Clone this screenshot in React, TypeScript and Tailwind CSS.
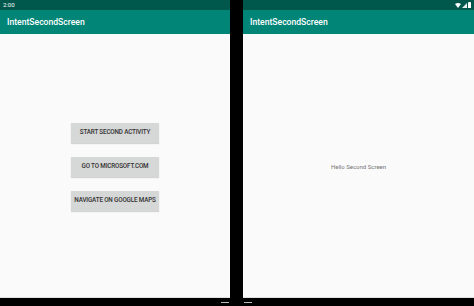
import React from "react";

const font = { fontFamily: "Roboto, 'Liberation Sans', sans-serif" };

function StatusIcons() {
  return (
    <div className="flex items-center gap-[1px]">
      <svg width="6" height="5" viewBox="0 0 12 10">
        <path d="M0 2 Q6 -2 12 2 L6 10 Z" fill="#fff" />
      </svg>
      <svg width="5" height="5" viewBox="0 0 10 10">
        <path d="M10 0 L10 10 L0 10 Z" fill="#fff" fillOpacity="0.9" />
      </svg>
      <svg width="3" height="6" viewBox="0 0 6 12">
        <rect x="1" y="0" width="4" height="2" fill="#fff" />
        <rect x="0" y="1" width="6" height="11" fill="#fff" />
      </svg>
    </div>
  );
}

function Screen({ left, children }: { left: boolean; children: React.ReactNode }) {
  return (
    <div className="flex flex-col h-full flex-1 min-w-0">
      <div className="h-[10px] bg-[#00574b] flex items-center justify-between px-[3px] text-white text-[6px] leading-none">
        <span>{left ? "2:00" : ""}</span>
        {!left && <StatusIcons />}
      </div>
      <div className="h-[24px] bg-[#008577] flex items-center px-[7px] text-white text-[8.6px] font-medium">
        IntentSecondScreen
      </div>
      <div className="flex-1 bg-[#fafafa] flex flex-col items-center justify-center border-b border-[#e0e0e0]">
        {children}
      </div>
    </div>
  );
}

function Btn({ label }: { label: string }) {
  return (
    <div className="w-[88px] h-[20px] bg-[#d6d7d7] flex items-center justify-center text-[#333] text-[6.3px] font-medium tracking-tight whitespace-nowrap shadow-[0_1px_1px_rgba(0,0,0,0.15)]">
      {label}
    </div>
  );
}

export default function App() {
  return (
    <div className="w-[474px] h-[306px] bg-black flex flex-col overflow-hidden" style={font}>
      <div className="flex h-[298px]">
        <div className="w-[230px] h-full flex">
          <Screen left>
            <div className="flex flex-col gap-[14px] mt-[2px]">
              <Btn label="START SECOND ACTIVITY" />
              <Btn label="GO TO MICROSOFT.COM" />
              <Btn label="NAVIGATE ON GOOGLE MAPS" />
            </div>
          </Screen>
        </div>
        <div className="w-[13px]" />
        <div className="w-[231px] h-full flex">
          <Screen left={false}>
            <div className="text-[6px] text-[#777] mt-[2px]">Hello Second Screen</div>
          </Screen>
        </div>
      </div>
      <div className="h-[8px] flex items-center">
        <div className="w-[221px]" />
        <div className="w-[8px] h-[1px] bg-[#bbb]" />
        <div className="w-[15px]" />
        <div className="w-[8px] h-[1px] bg-[#bbb]" />
      </div>
    </div>
  );
}
